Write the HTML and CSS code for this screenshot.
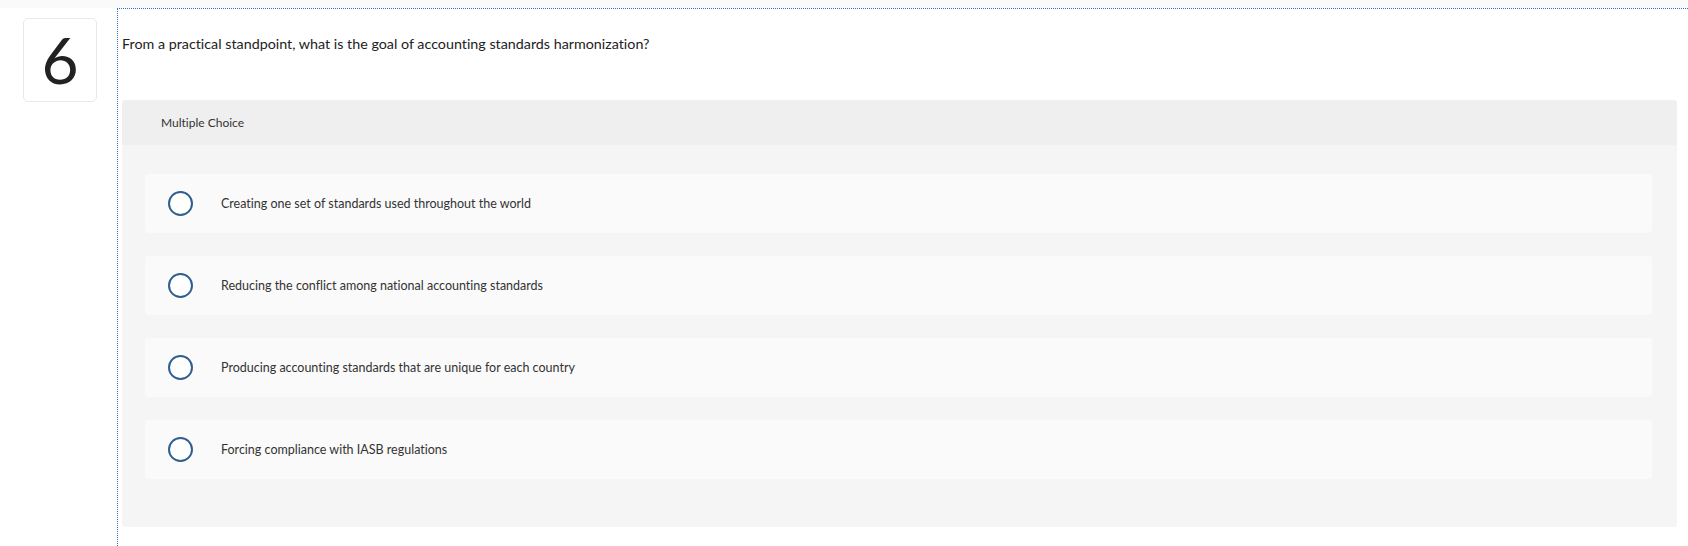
FILE: index.html
```html
<html>
<head>
<title>question 6</title>
<link rel="stylesheet" href="styles.css">
</head>
<body>
<div class="topbar"></div>
<div class="question-row">

  <div class="qnum-col">
    <div class="qnum">6</div>
  </div>

  <div class="question">
    <p class="prompt">From a practical standpoint, what is the goal of accounting standards harmonization?</p>

    <div class="answers">
      <div class="answers-head">Multiple Choice</div>
      <div class="answers-body">
        <label class="choice"><span class="radio"></span><span class="choice-text">Creating one set of standards used throughout the world</span></label>
        <label class="choice"><span class="radio"></span><span class="choice-text">Reducing the conflict among national accounting standards</span></label>
        <label class="choice"><span class="radio"></span><span class="choice-text">Producing accounting standards that are unique for each country</span></label>
        <label class="choice"><span class="radio"></span><span class="choice-text">Forcing compliance with IASB regulations</span></label>
      </div>
    </div>
  </div>

</div>
</body>
</html>
```

FILE: styles.css
```css
*, *::before, *::after {
  box-sizing: border-box;
}

body {
  margin: 0;
  font-family: Lato, "Open Sans", sans-serif;
  font-variant-ligatures: none;
  color: #333;
  background-color: #fff;
  overflow: hidden;
}

.topbar {
  height: 8px;
  background-color: #fafafa;
}

.question-row {
  display: flex;
  height: 538px;
}

.qnum-col {
  width: 117px;
  flex: none;
  padding: 10px 0 0 23px;
}

.qnum {
  width: 74px;
  height: 84px;
  border: 1px solid #e8e8e8;
  border-radius: 5px;
  display: flex;
  align-items: center;
  justify-content: center;
  font-size: 64px;
  color: #222;
  line-height: 1;
}

.question {
  flex: 1;
  border-top: 1px dotted #3572c6;
  border-left: 1px dotted #3572c6;
  padding: 0 11px 0 4px;
}

.prompt {
  margin: 0;
  padding-top: 25px;
  line-height: 20px;
  font-size: 14.3px;
  color: #222;
}

.answers {
  margin-top: 46px;
  border-radius: 3px;
  overflow: hidden;
}

.answers-head {
  height: 45px;
  display: flex;
  align-items: center;
  padding-left: 39px;
  background-color: #efefef;
  font-size: 12px;
  color: #333;
}

.answers-body {
  display: flex;
  flex-direction: column;
  gap: 23px;
  padding: 29px 25px 48px 23px;
  background-color: #f5f5f5;
}

.choice {
  height: 59px;
  display: flex;
  align-items: center;
  gap: 28px;
  padding-left: 23px;
  background-color: #fafafa;
  border-radius: 4px;
  font-size: 12.5px;
  color: #333;
}

.radio {
  width: 25px;
  height: 25px;
  flex: none;
  border: 2px solid #2f5f8f;
  border-radius: 50%;
  background-color: #fff;
}
```
